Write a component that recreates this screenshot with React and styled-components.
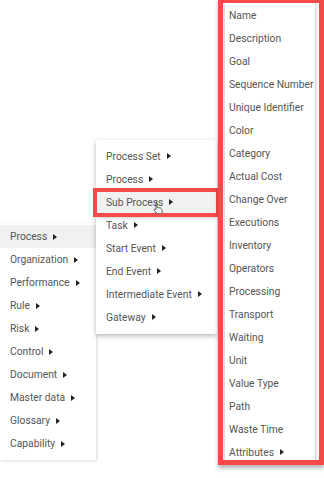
import styled, { createGlobalStyle } from "styled-components";

const Global = createGlobalStyle`
  html, body { margin: 0; padding: 0; background: #ffffff; }
  body { font-family: Roboto, "Liberation Sans", sans-serif; }
`;

const Stage = styled.div`
  display: flex;
  align-items: flex-start;
  width: 324px;
  height: 478px;
  overflow: hidden;
  background: #ffffff;
`;

const Menu = styled.ul`
  list-style: none;
  margin: ${(p) => p.$top || 0}px 0 0 0;
  padding: ${(p) => p.$pad || "0"};
  width: ${(p) => p.$width}px;
  box-sizing: border-box;
  background: #ffffff;
  box-shadow: ${(p) => p.$shadow || "0 2px 5px rgba(0,0,0,0.28)"};
  position: relative;
  z-index: ${(p) => p.$z || 1};
  flex-shrink: 0;
`;

const Item = styled.li`
  position: relative;
  display: flex;
  align-items: center;
  height: 23px;
  padding-left: ${(p) => p.$indent}px;
  font-size: 10.3px;
  color: #555555;
  white-space: nowrap;
  background: ${(p) => (p.$active ? "#f1f1f1" : "transparent")};
  outline: ${(p) => (p.$marked ? "4px solid #f44a4a" : "none")};
  outline-offset: -1px;
  box-shadow: ${(p) => (p.$marked ? "0 3px 4px rgba(0,0,0,0.3)" : "none")};
`;

const Caret = styled.span`
  display: inline-block;
  width: 0;
  height: 0;
  margin-left: 6px;
  border-top: 3px solid transparent;
  border-bottom: 3px solid transparent;
  border-left: 4px solid #222;
`;

const Frame = styled.div`
  margin: -2px 0 0 1px;
  width: 106px;
  height: 467px;
  box-sizing: border-box;
  border: 5px solid #f44a4a;
  padding: 0 4px 0 2px;
  overflow: hidden;
  box-shadow: 0 3px 4px rgba(0, 0, 0, 0.3);
  position: relative;
  z-index: 3;
  flex-shrink: 0;
`;

const Pointer = styled.svg`
  position: absolute;
  left: 57px;
  top: 10px;
  width: 11px;
  height: 13px;
`;

const first = ["Process", "Organization", "Performance", "Rule", "Risk", "Control", "Document", "Master data", "Glossary", "Capability"];
const second = ["Process Set", "Process", "Sub Process", "Task", "Start Event", "End Event", "Intermediate Event", "Gateway"];
const third = [
  "Name", "Description", "Goal", "Sequence Number", "Unique Identifier", "Color", "Category",
  "Actual Cost", "Change Over", "Executions", "Inventory", "Operators", "Processing", "Transport",
  "Waiting", "Unit", "Value Type", "Path", "Waste Time",
];

export default function App() {
  return (
    <Stage>
      <Global />
      <Menu $top={223} $width={96} $pad="2px 0 5px" $shadow="1px 1px 3px rgba(0,0,0,0.15)">
        {first.map((t, i) => (
          <Item key={t} $indent={10} $active={i === 0}>
            {t}
            <Caret />
          </Item>
        ))}
      </Menu>
      <Menu $top={140} $width={121} $pad="4.5px 0 5.5px" $z={2}>
        {second.map((t) => (
          <Item key={t} $indent={10} $marked={t === "Sub Process"} $active={t === "Sub Process"}>
            {t}
            <Caret />
            {t === "Sub Process" && (
              <Pointer viewBox="0 0 11 13">
                <path
                  d="M3 1.2c.6 0 1 .4 1 1v4.3l.3-.1c.5-.2 1 0 1.2.4.4-.3 1-.2 1.3.2.4-.2 1-.1 1.2.4l.6.9c.3.5.4 1 .4 1.6v1.3c0 .9-.7 1.6-1.6 1.6H4.8c-.5 0-1-.3-1.3-.7L1.3 9.1c-.3-.4-.2-.9.2-1.1.4-.3.8-.2 1.1.1l.4.5V2.2c0-.6.4-1 1-1z"
                  fill="#ffffff"
                  stroke="#333"
                  strokeWidth="0.8"
                />
              </Pointer>
            )}
          </Item>
        ))}
      </Menu>
      <Frame>
        <Menu $width={90} $pad="0.5px 0 0 4px" $shadow="0 0 4px rgba(0,0,0,0.35)">
          {third.map((t) => (
            <Item key={t} $indent={0}>
              {t}
            </Item>
          ))}
          <Item $indent={0}>
            Attributes
            <Caret />
          </Item>
        </Menu>
      </Frame>
    </Stage>
  );
}
